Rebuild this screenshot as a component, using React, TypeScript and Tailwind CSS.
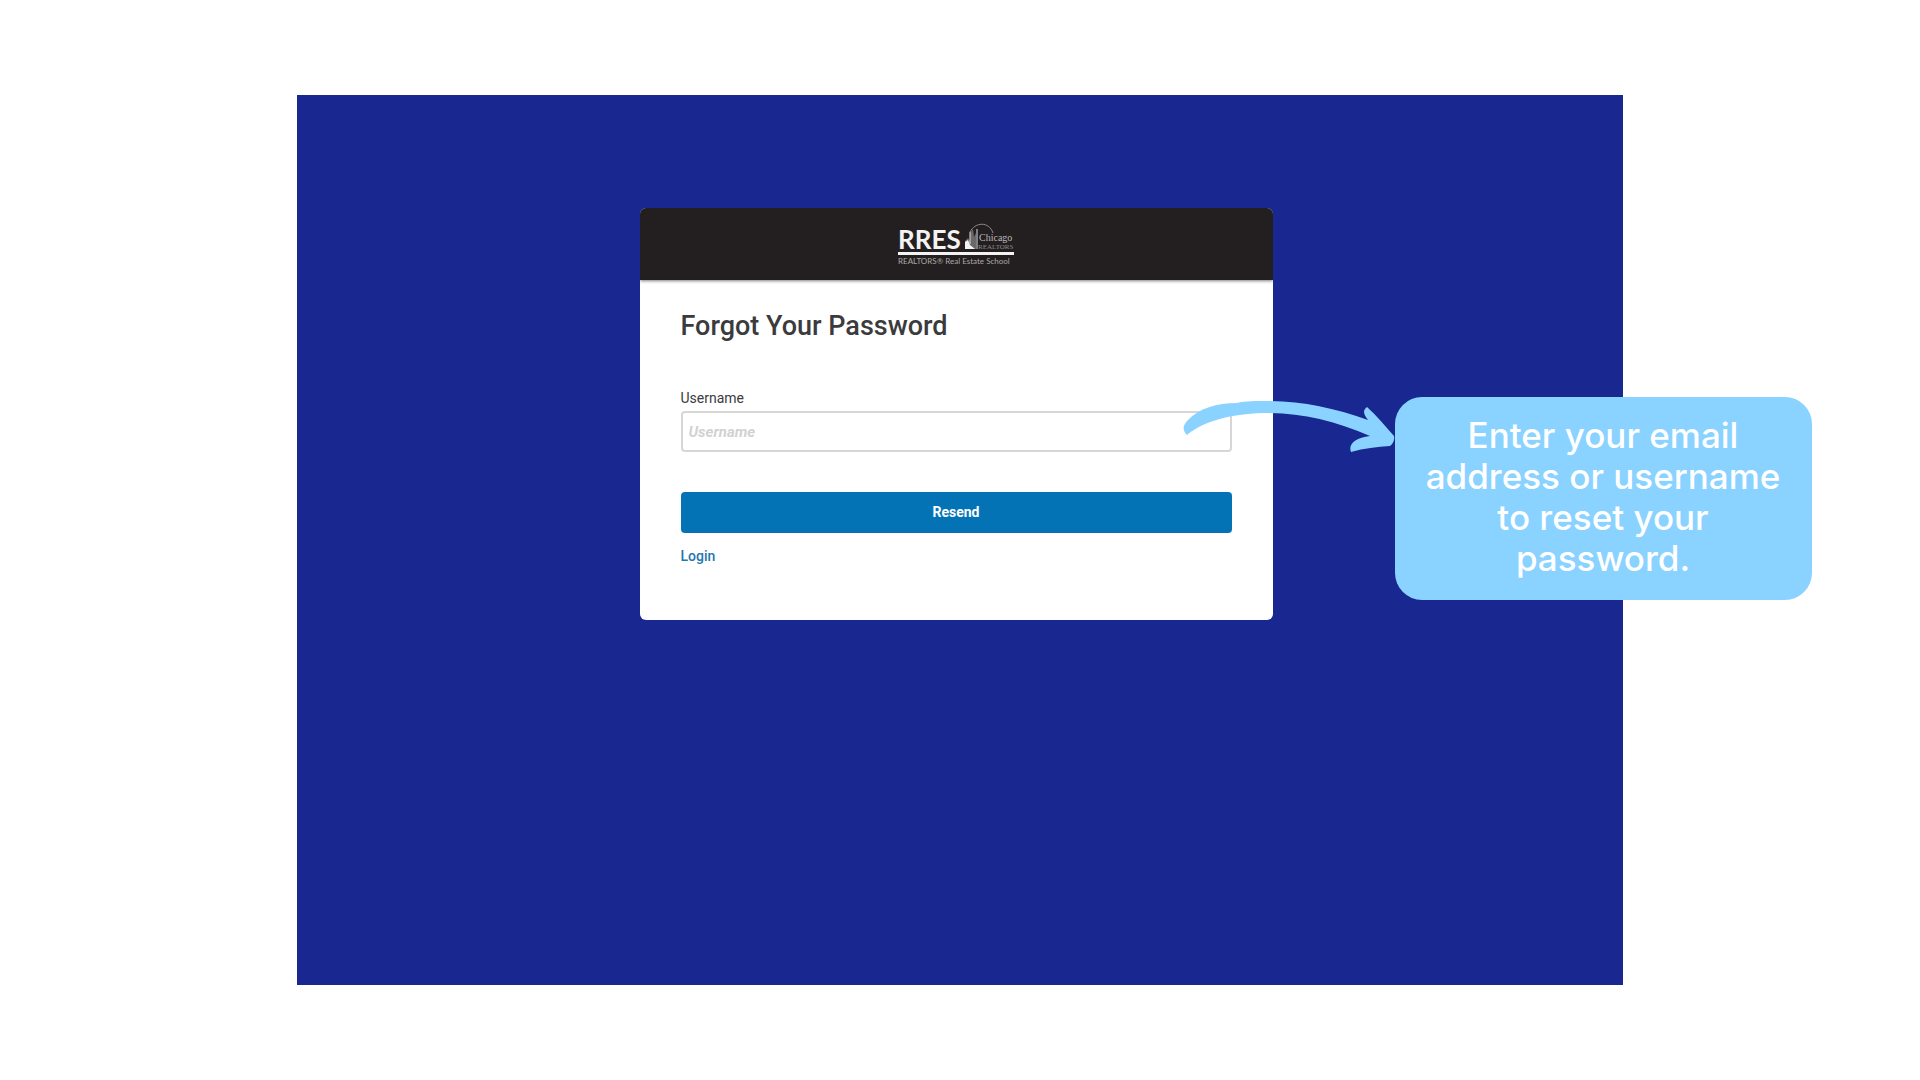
import { useState } from "react"

function SchoolLogo() {
  return (
    <svg width="116" height="50" viewBox="0 0 116 50" role="img" aria-label="RRES - REALTORS Real Estate School">
      <text x="0" y="30" fontSize="26" fontWeight="700" fill="#f4f3f3" className="font-[Lato,sans-serif]">RRES</text>
      <path d="M72 13C77 3 91 2 95 14" fill="none" stroke="#8d8a8b" strokeWidth="1" />
      <path d="M67 30v-8l3-3 2 3v-8l3-4 1 8 2-4v16z" fill="#6b6869" />
      <path d="M67 30v-7l3-2 2 5 5 4z" fill="#f4f3f3" />
      <path d="M72 13v12M79 10v20" stroke="#dedddd" strokeWidth="1" />
      <text x="81" y="22" fontSize="10" fill="#b8b6b6" className="font-['Liberation_Serif',serif]">Chicago</text>
      <text x="80" y="30" fontSize="7" fill="#8d8a8b" className="font-['Liberation_Serif',serif]">REALTORS</text>
      <rect x="0" y="33" width="116" height="3" fill="#f4f3f3" />
      <text x="0" y="45" fontSize="8" fill="#aaa8a8" className="font-[Lato,sans-serif]">REALTORS® Real Estate School</text>
    </svg>
  )
}

function Arrow() {
  return (
    <svg
      width="212"
      height="54"
      viewBox="0 0 212 54"
      className="pointer-events-none absolute top-[192px] -right-[122px]"
      aria-hidden="true"
    >
      <path
        d="M4 35C-1 30 0 26 4 21C16 8 34 3 54 3C62 1 74 1 85 1C120 1 151 8 185 20C181 15 179 11 184 7C194 16 203 27 211 36C212 40 210 44 207 46C194 47 181 48 168 52C165 44 172 38 187 36C152 21 119 13 85 13C55 13 23 19 4 35Z"
        fill="#8ad2ff"
      />
    </svg>
  )
}

export default function App() {
  const [username, setUsername] = useState("")

  return (
    <main className="flex min-h-screen items-center justify-center overflow-hidden bg-white p-6 font-[Roboto,sans-serif]">
      <div className="min-h-[890px] w-full max-w-[1326px] bg-[#192791] pt-[113px] pr-2">
        <div className="relative mx-auto max-w-[633px]">
          <div className="overflow-hidden rounded-md bg-white">
            <header className="flex h-[72px] items-center justify-center bg-[#231f20] shadow-[0_1px_3px_rgba(0,0,0,0.5)]">
              <SchoolLogo />
            </header>

            <form className="px-[41px] pt-7 pb-[52px]" onSubmit={(e) => e.preventDefault()}>
              <h1 className="text-[27px] leading-9 font-medium text-[#3b3b3d]">Forgot Your Password</h1>

              <label htmlFor="username" className="mt-11 block text-sm leading-5 text-[#3b3b3d]">
                Username
              </label>
              <input
                id="username"
                type="text"
                placeholder="Username"
                value={username}
                onChange={(e) => setUsername(e.target.value)}
                className="mt-[3px] block h-[41px] w-full rounded border-2 border-[#d6d6d6] px-1.5 text-[15px] outline-none placeholder:font-bold placeholder:text-[#d2d2d2] placeholder:italic"
              />

              <button
                type="submit"
                className="mt-10 block h-[41px] w-full rounded bg-[#0373b6] pb-0.5 text-sm font-bold text-white"
              >
                Resend
              </button>
              <a href="#login" className="mt-[13px] inline-block text-sm leading-5 font-medium text-[#1f78ad]">
                Login
              </a>
            </form>
          </div>

          <Arrow />
          <aside className="absolute top-[189px] left-full ml-[122px] flex h-[203px] w-[417px] items-center justify-center rounded-[27px] bg-[#8ad2ff] px-6 pb-1">
            <p className="text-center font-[Inter,sans-serif] text-[35px] leading-[41px] font-medium text-white">
              Enter your email address or username to reset your password.
            </p>
          </aside>
        </div>
      </div>
    </main>
  )
}
